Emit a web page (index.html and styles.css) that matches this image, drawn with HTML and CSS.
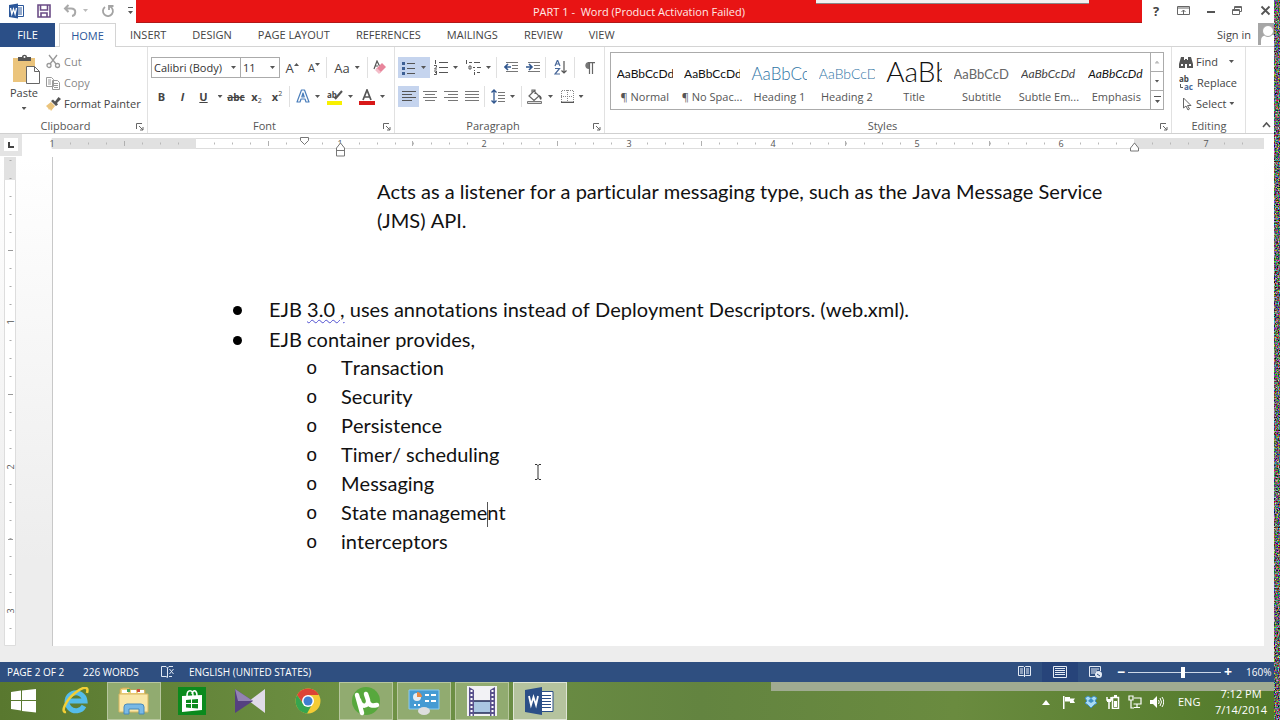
FILE: index.html
```html
<!DOCTYPE html>
<html lang="en">
<head>
<meta charset="utf-8">
<title>PART 1 - Word</title>
<link rel="stylesheet" href="styles.css">
</head>
<body>
<div class="screen">
<div class="main">

<header class="titlebar">
  <div class="quick">
    <svg class="q-word" width="16" height="16" viewBox="0 0 16 16"><path fill="#fff" stroke="#2b579a" d="M8 2.500h6.500v11H8z"/><path stroke="#2b579a" d="M9 5h4M9 7h4M9 9h4M9 11h4"/><path fill="#2b579a" d="M0 2 9 .5v15L0 14z"/><path fill="none" stroke="#fff" stroke-width="1.300" d="m1.500 5 1.300 6L4.500 6l1.600 5 1.400-6"/></svg>
    <button class="q-btn" aria-label="Save"><svg width="14" height="14" viewBox="0 0 14 14"><path fill="none" stroke="#6b4c86" stroke-width="1.600" d="M1 1h12v12H1zM3.500 1v5h7V1M4 13V9h6v4"/></svg></button>
    <button class="q-btn" aria-label="Undo"><svg width="14" height="13" viewBox="0 0 14 13"><path fill="none" stroke="#a9a9a9" stroke-width="2" d="M5.500 1 2 4.500 5.500 8M2 4.500h6c6 0 5 7 1 7.500"/></svg></button>
    <i class="caret light"></i>
    <button class="q-btn redo" aria-label="Repeat"><svg width="14" height="14" viewBox="0 0 14 14"><path fill="none" stroke="#a3a3a3" stroke-width="1.800" d="M4 3a5 5 0 1 0 5-.5M8 6V2h4.500"/></svg></button>
    <button class="q-more" aria-label="Customize"><svg width="7" height="8" viewBox="0 0 7 8"><path fill="#555" d="M1 0h5v1H1zM1 4h5L3.500 7z"/></svg></button>
  </div>
  <h1 class="title">PART 1 -&nbsp; Word (Product Activation Failed)<span class="notch"></span></h1>
  <div class="winbtns">
    <button aria-label="Help" class="help">?</button>
    <button aria-label="Ribbon display options"><svg width="13" height="11" viewBox="0 0 13 11"><path fill="none" stroke="#666" d="M.5 1.500h12v8H.5zM.5 3h12M6.500 9V5M4.500 7l2-2 2 2"/></svg></button>
    <button aria-label="Minimize"><svg width="10" height="11" viewBox="0 0 10 11"><path stroke="#555" stroke-width="2" d="M1 7h8"/></svg></button>
    <button aria-label="Restore"><svg width="11" height="11" viewBox="0 0 11 11"><path fill="none" stroke="#666" d="M.5 4.500h7v5h-7zM.5 5.500h7M2.500 4V1.500h7v5H8M2.500 2.500h7"/></svg></button>
    <button aria-label="Close" class="close"><svg width="11" height="11" viewBox="0 0 11 11"><path stroke="#555" stroke-width="1.800" d="m1.500 1.500 8 8M9.500 1.500l-8 8"/></svg></button>
  </div>
</header>

<nav class="tabs">
  <button class="tab file">FILE</button>
  <button class="tab home">HOME</button>
  <button class="tab">INSERT</button>
  <button class="tab">DESIGN</button>
  <button class="tab">PAGE LAYOUT</button>
  <button class="tab">REFERENCES</button>
  <button class="tab">MAILINGS</button>
  <button class="tab">REVIEW</button>
  <button class="tab">VIEW</button>
  <a class="signin" href="#">Sign in</a>
  <svg class="avatar" width="16" height="22" viewBox="0 0 16 22"><path fill="#a6a6a6" d="M0 0h16v22H0z"/><path fill="#fff" d="M3 22v-4c0-3 1-5 5-6h8v10z"/><circle cx="10" cy="8" r="5.500" fill="#fff" stroke="#a6a6a6"/></svg>
</nav>

<section class="ribbon">
  <div class="group clipboard">
    <div class="body">
      <button class="paste">
        <svg width="28" height="30" viewBox="0 0 28 30"><path fill="#ebc47c" d="M1 4h22v24H1z"/><path fill="#555" d="M6 3h4c0-3 5-3 5 0h4v4H6z"/><circle cx="12.500" cy="3" r="1" fill="#fff"/><path fill="#fff" stroke="#666" d="M14.500 12.500h8l5 5v12h-13zM22.500 12.500v5h5"/></svg>
        Paste<i class="caret"></i>
      </button>
      <div class="stack">
        <button class="line dim"><svg width="15" height="15" viewBox="0 0 15 15"><path fill="none" stroke="#999" stroke-width="1.300" d="M3 1l7 9M11 1l-7 9"/><circle cx="3" cy="11.500" r="2" fill="none" stroke="#999" stroke-width="1.300"/><circle cx="11.500" cy="11.500" r="2" fill="none" stroke="#999" stroke-width="1.300"/></svg>Cut</button>
        <button class="line dim"><svg width="15" height="14" viewBox="0 0 15 14"><path fill="#fff" stroke="#999" d="M.5 1.500h5l2 2v7h-7zM2 4h3M2 6h3M2 8h3M6.500 4.500h5l2 2v7h-7zM8 7.500h4M8 9.500h4M8 11.500h4"/></svg>Copy</button>
        <button class="line"><svg width="15" height="14" viewBox="0 0 15 14"><path fill="#ebc47c" d="m0 9 5-4 4 4-4 5-1-2-1 1-1-2z"/><path fill="#555" d="m5 4 2-1.500 2 2L12.500 0 15 2l-4 4 1 1.500L10 9z"/></svg>Format Painter</button>
      </div>
    </div>
    <div class="label">Clipboard<svg class="launch" width="8" height="8" viewBox="0 0 8 8"><path fill="none" stroke="#666" d="M.5 6V.5H6M3 3l4 4M7 4v3H4"/></svg></div>
  </div>

  <div class="group font">
    <div class="body rows">
      <div class="row">
        <span class="combo fontname"><select aria-label="Font"><option>Calibri (Body)</option></select><i class="caret"></i></span>
        <span class="combo fontsize"><select aria-label="Font size"><option>11</option></select><i class="caret"></i></span>
        <button class="b24 big">A<svg width="5" height="12" viewBox="0 0 5 12"><path fill="#555" d="M0 4h5L2.500 1z"/></svg></button>
        <button class="b20">A<svg width="5" height="12" viewBox="0 0 5 12"><path fill="#555" d="M0 1h5L2.500 4z"/></svg></button>
        <i class="sep"></i>
        <button class="b36 big">Aa<i class="caret"></i></button>
        <i class="sep"></i>
        <button class="b20" aria-label="Clear formatting"><svg width="14" height="16" viewBox="0 0 14 16"><path fill="none" stroke="#555" stroke-width="1.200" d="m1 9 3-8 2.500 5M2 6h3"/><path fill="#e8859b" d="m9 3 4 4-6 6-4-4z"/><path fill="#f3bcc8" d="m4 8 4 4-2 2-4-4z"/></svg></button>
      </div>
      <div class="row">
        <button class="b21"><b>B</b></button>
        <button class="b21"><b><em>I</em></b></button>
        <button class="b21"><b><u>U</u></b></button>
        <button class="b12" aria-label="Underline style"><i class="caret"></i></button>
        <button class="b20 small"><b><s>abc</s></b></button>
        <button class="b21"><b>x</b><sub>2</sub></button>
        <button class="b20"><b>x</b><sup>2</sup></button>
        <i class="sep"></i>
        <button class="b32" aria-label="Text effects"><svg width="14" height="15" viewBox="0 0 14 15"><path fill="#fff" stroke="#4a7ebb" stroke-width="1.200" stroke-linejoin="round" d="M1 13 5.500 1h3L13 13h-3L9 10H5l-1 3zM7 4 5.800 8h2.400z"/></svg><i class="caret"></i></button>
        <button class="b32" aria-label="Highlight"><svg width="16" height="16" viewBox="0 0 16 16"><text x="0" y="9" class="tiny">ab</text><path stroke="#555" stroke-width="2" d="m8 10 7-8"/><path fill="#f8f000" d="M0 12h15v4H0z"/></svg><i class="caret"></i></button>
        <button class="b32" aria-label="Font color"><svg width="16" height="16" viewBox="0 0 16 16"><path fill="none" stroke="#555" stroke-width="1.700" d="M4 11 8 1l4 10M5.500 8h5"/><path fill="#d81818" d="M0 12h16v4H0z"/></svg><i class="caret"></i></button>
      </div>
    </div>
    <div class="label">Font<svg class="launch" width="8" height="8" viewBox="0 0 8 8"><path fill="none" stroke="#666" d="M.5 6V.5H6M3 3l4 4M7 4v3H4"/></svg></div>
  </div>

  <div class="group para">
    <div class="body rows">
      <div class="row">
        <button class="b32 on" aria-label="Bullets"><svg width="14" height="14" viewBox="0 0 14 14"><path fill="#3d5f94" d="M0 1h3v3H0zM0 6h3v3H0zM0 11h3v3H0z"/><path stroke="#555" d="M5 2.500h8M5 7.500h8M5 12.500h8"/></svg><i class="caret"></i></button>
        <button class="b32" aria-label="Numbering"><svg width="14" height="15" viewBox="0 0 14 15"><path fill="none" stroke="#555" d="M1.500 0v4M0 5.500h2.500v1.500L.5 9H3M0 11h2.500v3.500H0M1 12.500h2M5 2.500h9M5 7.500h9M5 12.500h9"/></svg><i class="caret"></i></button>
        <button class="b32" aria-label="Multilevel list"><svg width="16" height="15" viewBox="0 0 16 15"><path fill="none" stroke="#555" d="M1.500 0v4M4 2.500h3M9 2.500h6M4 6h2v3H4zM8 7.500h2M12 7.500h4M9.500 10v1M9.500 12v3M12 12.500h3"/></svg><i class="caret"></i></button>
        <i class="sep"></i>
        <button class="b24" aria-label="Decrease indent"><svg width="15" height="12" viewBox="0 0 15 12"><path fill="none" stroke="#777" d="M2 .5h12M8 3.500h6M8 6.500h6M2 9.500h12"/><path fill="none" stroke="#31578f" stroke-width="1.600" d="M7 5H1M4 2 1 5l3 3"/></svg></button>
        <button class="b20" aria-label="Increase indent"><svg width="15" height="12" viewBox="0 0 15 12"><path fill="none" stroke="#777" d="M2 .5h12M8 3.500h6M8 6.500h6M2 9.500h12"/><path fill="none" stroke="#31578f" stroke-width="1.600" d="M0 5h6M3 2l3 3-3 3"/></svg></button>
        <i class="sep"></i>
        <button class="b24" aria-label="Sort"><svg width="13" height="15" viewBox="0 0 13 15"><path fill="none" stroke="#49689a" stroke-width="1.200" d="m1 6 2.500-6L6 6M2 4h3M1 8.500h4.500L1 14h5"/><path fill="none" stroke="#555" stroke-width="1.200" d="M10 1v12M7.500 10.500 10 13l2.500-2.500"/></svg></button>
        <i class="sep"></i>
        <button class="b24" aria-label="Show marks"><svg width="11" height="12" viewBox="0 0 11 12"><path fill="#777" d="M5 0v7C0 7 0 0 5 0z"/><path fill="none" stroke="#666" stroke-width="1.200" d="M4 .6h7M5.500 0v12M8.500 0v12"/></svg></button>
      </div>
      <div class="row">
        <button class="b21 on" aria-label="Align left"><svg width="14" height="12" viewBox="0 0 14 12"><path stroke="#555" d="M0 .5h14M0 3.500h10M0 6.500h14M0 9.500h10"/></svg></button>
        <button class="b21" aria-label="Center"><svg width="14" height="12" viewBox="0 0 14 12"><path stroke="#777" d="M0 .5h14M2 3.500h10M0 6.500h14M2 9.500h10"/></svg></button>
        <button class="b21" aria-label="Align right"><svg width="14" height="12" viewBox="0 0 14 12"><path stroke="#777" d="M0 .5h14M4 3.500h10M0 6.500h14M4 9.500h10"/></svg></button>
        <button class="b21" aria-label="Justify"><svg width="14" height="12" viewBox="0 0 14 12"><path stroke="#777" d="M0 .5h14M0 3.500h14M0 6.500h14M0 9.500h14"/></svg></button>
        <i class="sep"></i>
        <button class="b32" aria-label="Line spacing"><svg width="14" height="15" viewBox="0 0 14 15"><path fill="none" stroke="#31578f" stroke-width="1.300" d="M3 1v13M.5 3.500 3 1l2.500 2.500M.5 11.500 3 14l2.500-2.500"/><path stroke="#777" d="M7 3.500h7M7 6.500h7M7 9.500h7M7 12.500h7"/></svg><i class="caret"></i></button>
        <i class="sep"></i>
        <button class="b32" aria-label="Shading"><svg width="16" height="15" viewBox="0 0 16 15"><path fill="#fff" stroke="#666" stroke-width="1.200" d="m2 7 5-5 5 5-5 4.500zM5 4V1h3v4"/><path fill="#555" d="M12 6q4 2 2 5-2-1-2-5z"/><path fill="#ddd" stroke="#777" d="M.5 12.500h14v2H.5z"/></svg><i class="caret"></i></button>
        <button class="b32" aria-label="Borders"><svg width="13" height="13" viewBox="0 0 13 13"><path fill="none" stroke="#888" stroke-dasharray="1 1" d="M.5 12V.5h12V12M6.500 0v12M0 6.500h12"/><path stroke="#444" stroke-width="1.200" d="M0 12.300h13"/></svg><i class="caret"></i></button>
      </div>
    </div>
    <div class="label">Paragraph<svg class="launch" width="8" height="8" viewBox="0 0 8 8"><path fill="none" stroke="#666" d="M.5 6V.5H6M3 3l4 4M7 4v3H4"/></svg></div>
  </div>

  <div class="group styles">
    <div class="body">
      <div class="gallery">
        <button class="style"><span class="sample">AaBbCcDd</span>¶ Normal</button>
        <button class="style"><span class="sample">AaBbCcDd</span>¶ No Spac...</button>
        <button class="style"><span class="sample h1s">AaBbCc</span>Heading 1</button>
        <button class="style"><span class="sample h2s">AaBbCcD</span>Heading 2</button>
        <button class="style"><span class="sample titles">AaBb</span>Title</button>
        <button class="style"><span class="sample subs">AaBbCcD</span>Subtitle</button>
        <button class="style"><span class="sample subtle">AaBbCcDd</span>Subtle Em...</button>
        <button class="style"><span class="sample emph">AaBbCcDd</span>Emphasis</button>
      </div>
      <div class="scroller">
        <button aria-label="Row up"><i class="caret up"></i></button>
        <button aria-label="Row down"><i class="caret"></i></button>
        <button aria-label="More styles"><svg width="7" height="8" viewBox="0 0 7 8"><path fill="#555" d="M0 0h7v1H0zM1 4h5L3.500 7z"/></svg></button>
      </div>
    </div>
    <div class="label">Styles<svg class="launch" width="8" height="8" viewBox="0 0 8 8"><path fill="none" stroke="#666" d="M.5 6V.5H6M3 3l4 4M7 4v3H4"/></svg></div>
  </div>

  <div class="group editing">
    <div class="body">
      <div class="stack">
        <button class="line"><svg width="14" height="12" viewBox="0 0 14 12"><path fill="#555" d="M2 1h3v3h1V3h2v1h1V1h3l2 7v4H8V8H6v4H0V8z"/><path fill="#fff" d="M2 8h2v2H2zM10 8h2v2h-2z"/></svg>Find<i class="caret far"></i></button>
        <button class="line"><svg width="15" height="18" viewBox="0 0 15 18"><text x="0" y="8" class="tiny">ab</text><text x="5" y="16" class="tiny blue">ac</text><path fill="none" stroke="#555" d="M1.500 10v3.500H4"/></svg>Replace</button>
        <button class="line"><svg width="14" height="14" viewBox="0 0 14 14"><path fill="#fff" stroke="#666" d="M4.500 1v10L7 9l2 4 1.500-1-2-3.500H12z"/></svg>Select<i class="caret"></i></button>
      </div>
    </div>
    <div class="label">Editing</div>
  </div>
  <button class="collapse" aria-label="Collapse ribbon"><svg width="9" height="6" viewBox="0 0 9 6"><path fill="none" stroke="#555" stroke-width="1.600" d="m1 5 3.500-4L8 5"/></svg></button>
</section>

<div class="rulerbar">
  <div class="tabstop"><span><svg width="6" height="6" viewBox="0 0 6 6"><path fill="none" stroke="#444" stroke-width="2" d="M1 0v5h5"/></svg></span></div>
  <svg class="hruler" width="100%" height="24">
    <path fill="#fff" stroke="#ddd" d="M0 4.500h1211v10H0z"/>
    <path fill="#e1e1e1" d="M0 4h144v11H0zM1082 4h130v11h-130z"/>
    <path stroke="#b8b8b8" stroke-dasharray="1 17" stroke-width="2" d="M18 9.500h120M162 9.500h120M307 9.500h120M451 9.500h120M595 9.500h120M740 9.500h120M884 9.500h120M1028 9.500h120M1172 9.500h36"/>
    <path stroke="#b0b0b0" d="M72.500 7v5M216.500 7v5M360.500 7v5M505.500 7v5M649.500 7v5M793.500 7v5M937.500 7v5"/>
    <g class="rnum"><text x="0" y="13">1</text><text x="288" y="13">1</text><text x="432" y="13">2</text><text x="577" y="13">3</text><text x="721" y="13">4</text><text x="865" y="13">5</text><text x="1009" y="13">6</text><text x="1154" y="13">7</text></g>
    <path fill="#fff" stroke="#777" d="M248.500 3.500h8v3l-4 4-4-4zM288.500 9l4 5v8h-8v-8zM284.500 16.500h8M1082.500 9l4 5v3h-8v-3z"/>
  </svg>
</div>

<main class="doc">
  <svg class="vruler" width="12" height="489" viewBox="0 0 12 489">
    <path fill="#fff" stroke="#ddd" d="M.5 0v488.500h11V0"/><path fill="#e1e1e1" d="M0 0h12v23H0z"/>
    <path stroke="#aaa" stroke-width="2" stroke-dasharray="1 17" d="M6.500 3v20M6.500 39v110M6.500 183v110M6.500 327v110M6.500 471v18"/>
    <path stroke="#999" d="M4 93.500h5M4 237.500h5M4 382.500h5"/>
    <g class="rnum"><text transform="translate(10 165) rotate(-90)">1</text><text transform="translate(10 310) rotate(-90)">2</text><text transform="translate(10 454) rotate(-90)">3</text></g>
  </svg>
  <article class="page">
    <p class="lead">Acts as a listener for a particular messaging type, such as the Java Message Service (JMS) API.</p>
    <ul class="outer">
      <li>EJB <span class="wavy">3.0 ,</span> uses annotations instead of Deployment Descriptors. (web.xml).</li>
      <li>EJB container provides,
        <ul class="inner">
          <li>Transaction</li>
          <li>Security</li>
          <li>Persistence</li>
          <li>Timer/ scheduling</li>
          <li>Messaging</li>
          <li>State manageme<span class="cursor"></span>nt</li>
          <li>interceptors</li>
        </ul>
      </li>
    </ul>
    <svg class="ibeam" width="8" height="16" viewBox="0 0 8 16"><path fill="none" stroke="#333" d="M1 .5h2l1 1 1-1h2M4 1v14M1 15.500h2l1-1 1 1h2"/></svg>
  </article>
</main>

<footer class="status">
  <span class="s-page">PAGE 2 OF 2</span><span class="s-words">226 WORDS</span>
  <svg width="15" height="13" viewBox="0 0 15 13"><path fill="none" stroke="#dfe7f3" d="M7.500 11.500V2L6 .5H1.500v10H6zM7.500 2 9 .5h4M9 10.500h3M9.500 3l4 5M13.500 3l-4 5"/></svg>
  <span class="s-lang">ENGLISH (UNITED STATES)</span>
  <div class="views">
    <button aria-label="Read mode"><svg width="13" height="12" viewBox="0 0 13 12"><path fill="none" stroke="#e4ebf5" d="M.5.500h5l1 1 1-1h5v9h-5l-1 1-1-1h-5zM6.500 1v10M2 3h3M2 5h3M2 7h3M8 3h3M8 5h3M8 7h3"/></svg></button>
    <button class="active" aria-label="Print layout"><svg width="14" height="12" viewBox="0 0 14 12"><path fill="none" stroke="#e4ebf5" d="M.5.500h13v11H.5zM2 2.500h10M2 4.500h10M2 6.500h10M2 8.500h10"/></svg></button>
    <button aria-label="Web layout"><svg width="14" height="13" viewBox="0 0 14 13"><path fill="none" stroke="#e4ebf5" d="M6 10.500H.5V.500h11V5M2 3h8M2 5h6M2 7h4"/><circle cx="9.500" cy="8.500" r="3.500" fill="#e4ebf5"/><path stroke="#31507f" d="m8 8 3 2"/></svg></button>
  </div>
  <button class="zoom-btn" aria-label="Zoom out">−</button>
  <input class="zoom" type="range" min="0" max="100" value="59" aria-label="Zoom">
  <button class="zoom-btn" aria-label="Zoom in">+</button>
  <span class="pct">160%</span>
</footer>

<div class="taskbar">
  <div class="band"></div>
  <button class="start" aria-label="Start"><svg width="26" height="24" viewBox="0 0 26 24"><path fill="#fff" d="m0 3 10-1.500V11H0zM11 1.400 25 0v11H11zM0 12h10v9.500L0 20zM11 12h14v11.500L11 22z"/></svg></button>
  <button class="app" aria-label="Internet Explorer"><svg width="30" height="28" viewBox="0 0 30 28"><path fill="none" stroke="#55bdea" stroke-width="5" d="M23 19a9 9 0 1 1 1-5H8"/><path fill="none" stroke="#f3cf35" stroke-width="2.500" d="M5 25C-1 26 5 13 14 6s14-7 12 0"/></svg></button>
  <button class="app open" aria-label="File Explorer"><svg width="32" height="28" viewBox="0 0 32 28"><path fill="#f0d481" stroke="#c9a650" d="M2 3q0-2 3-2h6l2 2h14v21H2z"/><path fill="#fff" d="M4 3h6v3H4zM13 3h5v3h-5zM20 3h6v3h-6z"/><path fill="#41a55b" d="M9 2h3v3H9z"/><path fill="#cf4d3e" d="M19 2h3v3h-3z"/><path fill="#f9e7a8" stroke="#d9b861" d="M1 7h29v18H1z"/><path fill="#78b9e6" stroke="#4789bc" d="M6 27v-7q0-3 3-3h14q3 0 3 3v7h-5v-5H11v5z"/></svg></button>
  <button class="app" aria-label="Store"><svg width="28" height="28" viewBox="0 0 28 28"><path fill="#0b8a1d" d="M0 0h28v28H0z"/><path fill="none" stroke="#fff" stroke-width="1.600" d="M9 9c0-7 6-7 6 0M14 7c1-5 5-4 5 2"/><path fill="#fff" d="m4 9 20-1v15L4 25z"/><path fill="#0b8a1d" d="m8 13 5-.5V16H8zM14 12.400l6-.4v4h-6zM8 17h5v4l-5-.5zM14 17h6v4.500l-6-.4z"/></svg></button>
  <button class="app" aria-label="KMPlayer"><svg width="30" height="24" viewBox="0 0 30 24"><path fill="#e0dbe8" d="M30 0v24L14 12z"/><path fill="#554080" d="M0 0 18 12 0 24z"/><path fill="#9383b3" d="m0 0 18 12H3z"/></svg></button>
  <button class="app" aria-label="Chrome"><svg width="26" height="26" viewBox="0 0 26 26"><circle cx="13" cy="13" r="12.500" fill="#f4cc35"/><path fill="#dc4436" d="M2 7a12.500 12.500 0 0 1 22 0H13L7 14z"/><path fill="#36a54f" d="M2 7a12.500 12.500 0 0 0 10 18.500l5-9-9-1z"/><circle cx="13" cy="13" r="6" fill="#fff"/><circle cx="13" cy="13" r="4.500" fill="#3f7fd0"/></svg></button>
  <button class="app open" aria-label="uTorrent"><svg width="30" height="30" viewBox="0 0 30 30"><circle cx="15" cy="15" r="14" fill="#57a83d"/><path fill="none" stroke="#fff" stroke-width="4.500" stroke-linecap="round" stroke-linejoin="round" d="m6 9 5 18M8 14c2 8 10 7 9 0L15 8M17 15c1 5 5 5 9 4"/></svg></button>
  <button class="app open" aria-label="Control Panel"><svg width="32" height="28" viewBox="0 0 32 28"><path fill="#459bd3" stroke="#8bcaf0" d="M1 3h30v19H1z"/><circle cx="9" cy="10" r="4" fill="#e9edf1"/><path fill="#e98943" d="M9 10V5a5 5 0 0 1 5 5z"/><path stroke="#fff" stroke-width="2" d="M17 8h4M23 8h5M17 14h4M23 14h5M6 18h2M10 18h2"/><ellipse cx="16" cy="24" rx="6" ry="4" fill="#dedede"/></svg></button>
  <button class="app open" aria-label="Movie Maker"><svg width="30" height="30" viewBox="0 0 30 30"><path fill="#f2f2f5" d="M0 0h30v30H0z"/><path fill="#59518c" d="M2 1l5 3v26H2zM28 1l-5 3v26h5z"/><path fill="#a9c6e2" d="M7 15h16v12H7z"/><path stroke="#222a55" stroke-width="1.400" d="M7 15h16M7 27h16"/><path stroke="#fff" stroke-width="2" stroke-dasharray="2 2" d="M4.500 4v26M25.500 4v26"/></svg></button>
  <button class="app open current" aria-label="Word"><svg width="30" height="28" viewBox="0 0 30 28"><path fill="#fff" stroke="#2b4f87" d="M15 4.500h13v20H15z"/><path stroke="#2b4f87" d="M17 8.500h9M17 11.500h9M17 14.500h9M17 17.500h9M17 20.500h9"/><path fill="#2b4f87" d="m0 3 17-3v28L0 25z"/><path fill="none" stroke="#fff" stroke-width="1.800" d="m4 9 2 9 2.500-8 2.500 8 2-9"/></svg></button>
  <div class="tray">
    <svg width="8" height="5" viewBox="0 0 8 5"><path fill="#fff" d="M0 5h8L4 0z"/></svg>
    <svg width="14" height="14" viewBox="0 0 14 14"><path fill="#fff" d="M1 1h1.500v13H1zM3 2h5v1.500h5l-1.500 2L13 8H8V6.500H3z"/></svg>
    <svg width="14" height="14" viewBox="0 0 14 14"><path fill="#a9dcf4" stroke="#3f90c4" d="m1 3 3-2 3 2 3-2 3 2-2 3 2 2-3 2-3 3-3-3-3-2 2-2z"/><path fill="#3f90c4" d="m7 3 3 3-3 2-3-2z"/></svg>
    <svg width="14" height="14" viewBox="0 0 14 14"><path fill="none" stroke="#fff" stroke-width="1.500" d="M6.500 2.500h6v11h-6zM3 6v8M1 2v3h4V2"/><path fill="#fff" d="M8 0h3v2H8zM8 6h3v6H8zM1 4h4v3H1z"/></svg>
    <svg width="14" height="14" viewBox="0 0 14 14"><path fill="none" stroke="#fff" stroke-width="1.200" d="M6 3h7v6H5.500M9 9v3M6 12.500h6M1 1h4v4H1zM3 5v8h3"/></svg>
    <svg width="14" height="14" viewBox="0 0 14 14"><path fill="#fff" d="M0 5h3l4-4v12L3 9H0z"/><path fill="none" stroke="#fff" d="M8.500 5q1.500 2 0 4M10 3q3 4 0 8M12 2q3.500 5 0 10"/></svg>
    <span class="lang">ENG</span>
    <div class="clock"><span>7:12 PM</span><span>7/14/2014</span></div>
  </div>
</div>
</div>
<svg class="noise" width="6" height="100%"><filter id="n" x="0" y="0" width="100%" height="100%"><feTurbulence type="fractalNoise" baseFrequency=".7" numOctaves="2" seed="4"/><feColorMatrix values="2 0 0 0 -.6  0 2 0 0 -.6  0 0 2 0 -.6  0 0 0 0 1"/></filter><rect width="100%" height="100%" filter="url(#n)"/></svg>
</div>
</body>
</html>
```
FILE: styles.css
```css
* { box-sizing: border-box; }
body { margin: 0; font-family: "Open Sans", "Noto Sans", sans-serif; font-size: 11px; line-height: 14px; color: #444; background: #fff; }
button { font: inherit; color: inherit; background: none; border: 0; padding: 0; margin: 0; display: flex; align-items: center; justify-content: center; white-space: nowrap; }
svg { display: block; flex: none; }
.screen { display: flex; min-height: 100vh; }
.main { flex: 1; min-width: 0; display: flex; flex-direction: column; }
.noise { height: auto; align-self: stretch; color-interpolation-filters: sRGB; }

.caret { width: 5px; height: 3px; background: #555; clip-path: polygon(0 0, 100% 0, 50% 100%); flex: none; }
.caret.light { background: #bbb; }
.caret.up { background: #bbb; clip-path: polygon(50% 0, 100% 100%, 0 100%); }

.titlebar { display: flex; height: 23px; }
.quick { width: 136px; display: flex; align-items: center; padding: 0 2px 2px 9px; }
.q-btn { margin-left: 12px; }
.quick .caret { margin-left: 6px; }
.q-btn.redo { margin-left: 13px; }
.q-more { margin-left: auto; }
.title { position: relative; flex: 1; margin: 0; background: #e81414; border-bottom: 1px solid #b01818; color: #ffe9e6; font-size: 11px; font-weight: 400; line-height: 23px; text-align: center; }
.notch { position: absolute; top: 0; right: 53px; width: 273px; height: 4px; background: #f4f0f0; border-bottom: 1px solid #888; }
.winbtns { display: flex; padding-bottom: 2px; width: 132px; }
.winbtns button { width: 27px; flex: none; }
.winbtns .help { width: 28px; font-size: 13px; font-weight: 700; }
.winbtns .close { width: 23px; justify-content: flex-end; padding-right: 3px; }

.tabs { display: flex; height: 24px; align-items: stretch; border-bottom: 1px solid #d4d4d4; }
.tab { padding: 0 13px; }
.file { width: 55px; background: #2b4f87; color: #fff; margin-bottom: -1px; }
.home { width: 57px; margin: 0 1px -1px 4px; border: 1px solid #d4d4d4; border-bottom: 0; background: #fff; color: #2b579a; }
.signin { margin-left: auto; padding-right: 7px; color: #444; text-decoration: none; line-height: 23px; }

.ribbon { display: flex; height: 87px; border-bottom: 1px solid #d0d0d0; }
.group { display: flex; flex-direction: column; padding-top: 4px; border-right: 1px solid #e1e1e1; }
.body { display: flex; flex: 1; }
.label { display: flex; align-items: center; justify-content: center; height: 14px; position: relative; color: #555; padding-right: 16px; }
.launch { position: absolute; right: 3px; top: 4px; }
.clipboard { width: 148px; }
.paste { flex-direction: column; justify-content: flex-start; width: 46px; padding: 3px 0 0 2px; gap: 2px; }
.paste svg { margin-left: 4px; }
.paste .caret { margin-top: 5px; }
.stack { display: flex; flex-direction: column; }
.line { height: 21px; justify-content: flex-start; gap: 3px; }
.dim { color: #888; }
.far { margin-left: 8px; }

.font { width: 247px; padding-left: 3px; }
.para { width: 210px; padding-left: 3px; }
.rows { flex-direction: column; gap: 8px; padding-top: 6px; }
.row { display: flex; height: 21px; align-items: stretch; }
.row button { gap: 5px; flex: none; }
.b12 { width: 12px; }
.b20 { width: 20px; }
.b21 { width: 21px; }
.b24 { width: 24px; }
.b32 { width: 32px; }
.b36 { width: 36px; }
.on { background: #c5d4ee; }
.row .b20, .row .b21, .row .b24 { gap: 0; }
.big { font-size: 13px; }
.small { font-size: 10px; }
.row sub, .row sup { font-size: 7px; line-height: 7px; }
.row sup { margin-top: -7px; }
.row sub { margin-top: 7px; }
.sep { width: 1px; background: #e0e0e0; margin: 0 2px; }
.combo { display: flex; position: relative; border: 1px solid #ababab; align-items: center; }
.combo + .combo { border-left: 0; }
.combo select { appearance: none; border: 0; background: none; font: inherit; color: #333; padding: 0 0 0 2px; width: 100%; height: 19px; }
.combo .caret { position: absolute; right: 4px; }
.fontname { width: 90px; }
.fontsize { width: 39px; }
.tiny { font-size: 8px; font-weight: 700; fill: #444; }
.blue { fill: #49689a; }

.styles { flex: 1; min-width: 0; padding-left: 5px; }
.styles .body { flex: none; height: 58px; margin: 1px 7px 9px 0; border: 1px solid #ababab; }
.gallery { flex: 1; min-width: 0; display: grid; grid-template-columns: repeat(8, 1fr); }
.style { flex-direction: column; justify-content: flex-start; padding-top: 3px; color: #555; }
.sample { width: 56px; height: 34px; line-height: 36px; overflow: hidden; text-align: left; font-family: Lato, sans-serif; font-size: 12px; color: #111; }
.h1s { font-size: 17px; font-weight: 300; color: #2e74a5; }
.h2s { font-size: 14px; font-weight: 300; color: #2e74a5; }
.titles { font-size: 28px; line-height: 30px; font-weight: 300; }
.subs { font-size: 13px; color: #666; }
.subtle { font-style: italic; color: #444; }
.emph { font-style: italic; }
.scroller { width: 13px; display: flex; flex-direction: column; border-left: 1px solid #ababab; }
.scroller button { flex: 1; }
.scroller button + button { border-top: 1px solid #ababab; }
.editing { width: 74px; padding-left: 7px; }
.editing .label { padding-right: 6px; }
.collapse { width: 28px; align-self: flex-end; height: 16px; padding-left: 12px; }

.rulerbar { display: flex; height: 23px; }
.tabstop { width: 22px; height: 22px; background: #e4e4e4; padding: 4px; }
.tabstop span { display: flex; align-items: center; justify-content: center; height: 13px; background: #fff; }
.hruler { flex: 1; min-width: 0; margin-left: 30px; height: 24px; overflow: visible; }
.rnum { font-size: 9px; fill: #555; text-anchor: middle; }

.doc { flex: 1; display: flex; padding: 0 10px 16px 4px; background: linear-gradient(#fff, #ededed 80%); }
.vruler { margin-right: 36px; }
.page { position: relative; flex: 1; background: #fff; border-left: 1px solid #c8c8c8; padding: 20px 130px 0 324px; font-family: Lato, sans-serif; font-size: 20px; line-height: 29px; color: #111; font-kerning: none; font-variant-ligatures: none; }
.lead { margin: 0 0 60px; }
.page ul { list-style: none; margin: 0; padding: 0; }
.page .outer { margin-left: -108px; }
.outer li { position: relative; }
.outer > li + li { margin-top: 1px; }
.outer > li::before { content: ""; position: absolute; left: -36px; top: 11px; width: 9px; height: 9px; border-radius: 50%; background: #000; }
.page .inner { padding-left: 72px; margin-top: -1px; }
.inner li::before { content: "o"; position: absolute; left: -35px; top: 2px; font-family: "Liberation Mono", monospace; font-size: 19px; }
.wavy { text-decoration: underline wavy #5050d0 1px; text-underline-offset: 2px; }
.cursor { display: inline-block; width: 1px; height: 25px; margin-right: -1px; vertical-align: middle; background: #555; }
.ibeam { position: absolute; left: 481px; top: 307px; }

.status { display: flex; align-items: center; height: 20px; background: #2f4f80; color: #fff; font-size: 10px; padding-left: 7px; }
.s-page { width: 76px; white-space: nowrap; }
.s-words { width: 77px; white-space: nowrap; }
.s-lang { margin-left: 14px; }
.views { margin-left: auto; display: flex; height: 20px; }
.views button { width: 36px; }
.views .active { background: #27447a; }
.zoom-btn { width: 14px; font-size: 14px; font-weight: 700; }
.zoom { appearance: none; width: 93px; height: 12px; margin: 0; background: linear-gradient(#cdd8e8, #cdd8e8) center / 100% 1px no-repeat; }
.zoom::-webkit-slider-thumb { appearance: none; width: 4px; height: 11px; background: #fff; }
.pct { width: 39px; padding-left: 11px; }

.taskbar { position: relative; display: flex; height: 38px; background: linear-gradient(90deg, #59782f, #6f9245 30%, #638440 55%, #6a8b3f 75%, #527a2a); color: #fff; }
.band { position: absolute; left: 771px; right: 0; top: 0; height: 9px; background: #a0ab91; }
.start { width: 47px; }
.app { width: 54px; margin: 0 2px; border: 1px solid transparent; }
.open { background: #91ab70; border-color: #b7c79e; }
.current { background: #b5c39e; border-color: #dfe5d4; }
.tray { position: relative; margin-left: auto; display: flex; align-items: center; gap: 8px; padding-top: 2px; }
.tray > svg:first-child { margin-right: 4px; }
.lang { margin-left: 6px; width: 22px; }
.clock { width: 66px; display: flex; flex-direction: column; align-items: center; line-height: 16px; font-size: 11px; align-self: flex-start; padding-top: 2px; }
```
